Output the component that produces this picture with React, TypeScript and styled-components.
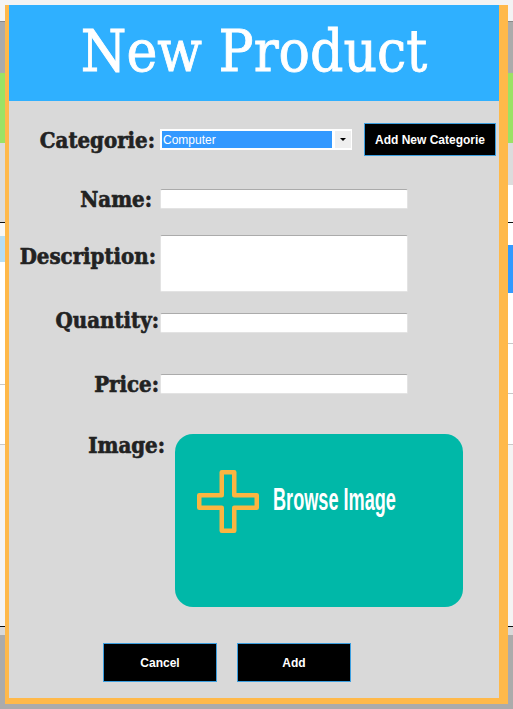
import styled, { createGlobalStyle } from 'styled-components';
import { FC } from 'react';

const GlobalStyle = createGlobalStyle`
  html, body {
    margin: 0;
    height: 709px;
    overflow: hidden;
  }
  body {
    font-family: "Liberation Sans", Arial, sans-serif;
    background:
      linear-gradient(to bottom,
        #f3f3f3 0 21px, #8a8a8a 21px 22px, #ababab 22px 73px, #9be264 73px 143px,
        #dcdcdc 143px 185px, #ffffff 185px 222px, #111 222px 223px, #ffffff 223px 245px,
        #3399ff 245px 293px, #ffffff 293px 343px, #c8c8c8 343px 344px, #ffffff 344px 393px,
        #c8c8c8 393px 394px, #ffffff 394px 444px, #c8c8c8 444px 445px, #f4f4f4 445px 626px,
        #111 626px 627px, #d9d9d9 627px 635px, #ababab 635px) right top / 5px 100% no-repeat,
      linear-gradient(to bottom,
        #f3f3f3 0 21px, #8a8a8a 21px 22px, #ababab 22px 73px, #9be264 73px 143px,
        #dcdcdc 143px 222px, #111 222px 223px, #f7f7f7 223px 236px, #b5def5 236px 262px,
        #ffffff 262px 384px, #c8c8c8 384px 385px, #ffffff 385px 444px, #c8c8c8 444px 445px,
        #f4f4f4 445px 626px, #111 626px 627px, #d9d9d9 627px 635px, #ababab 635px);
  }
`;

const PlusIcon: FC = () => (
  <IconBox width="62" height="63" viewBox="0 0 62 63">
    <path
      d="M24.75 2.25 H37.25 V25.25 H59.75 V37.75 H37.25 V60.75 H24.75 V37.75 H2.25 V25.25 H24.75 Z"
      fill="none"
      stroke="#fbb541"
      strokeWidth="4.5"
      strokeLinejoin="round"
    />
  </IconBox>
);

const App: FC = () => {
  return (
    <>
      <GlobalStyle />
      <Dialog>
        <Header>
          <Title>New Product</Title>
        </Header>
        <Body>
          <Row $top={22}>
            <Label $w={146}>Categorie:</Label>
            <Combo $gap={5}>
              <ComboValue>Computer</ComboValue>
              <ComboArrow>
                <Caret />
              </ComboArrow>
            </Combo>
            <ActionButton $w={132} $h={33} $gap={12}>Add New Categorie</ActionButton>
          </Row>
          <Row $top={33}>
            <Label $w={143}>Name:</Label>
            <TextBox $gap={8} />
          </Row>
          <Row $top={26} $topAlign>
            <Label $w={147} $pad={11}>Description:</Label>
            <TextArea $gap={4} />
          </Row>
          <Row $top={21}>
            <Label $w={150} $lift={3}>Quantity:</Label>
            <TextBox $gap={1} />
          </Row>
          <Row $top={41}>
            <Label $w={150}>Price:</Label>
            <TextBox $gap={1} />
          </Row>
          <Row $top={40} $topAlign>
            <Label $w={156} $pad={1}>Image:</Label>
            <BrowseCard>
              <PlusIcon />
              <BrowseText>Browse Image</BrowseText>
            </BrowseCard>
          </Row>
          <ButtonBar>
            <ActionButton $w={114} $h={39}>Cancel</ActionButton>
            <ActionButton $w={114} $h={39}>Add</ActionButton>
          </ButtonBar>
        </Body>
      </Dialog>
    </>
  );
};

export default App;

const Dialog = styled.div`
  margin: 5px 0 0 5px;
  width: 490px;
  height: 693px;
  border-left: 4px solid #ffb94a;
  border-right: 9px solid #ffb94a;
  border-bottom: 6px solid #ffb94a;
  display: flex;
  flex-direction: column;
`;

const Header = styled.div`
  height: 96px;
  flex-shrink: 0;
  background: #2fb0ff;
  display: flex;
  align-items: center;
  justify-content: center;
`;

const Title = styled.h1`
  margin: 0 0 4px 0;
  font-family: "DejaVu Serif", serif;
  font-stretch: condensed;
  font-weight: normal;
  font-size: 58px;
  line-height: 66px;
  color: #ffffff;
  -webkit-text-stroke: 0.8px #ffffff;
`;

const Body = styled.div`
  flex: 1;
  background: #d9d9d9;
  display: flex;
  flex-direction: column;
`;

const Row = styled.div<{ $top: number; $topAlign?: boolean }>`
  display: flex;
  align-items: ${(p) => (p.$topAlign ? 'flex-start' : 'center')};
  margin-top: ${(p) => p.$top}px;
`;

const Label = styled.div<{ $w: number; $pad?: number; $lift?: number }>`
  width: ${(p) => p.$w}px;
  flex-shrink: 0;
  text-align: right;
  font-family: "DejaVu Serif", serif;
  font-stretch: condensed;
  font-weight: bold;
  font-size: 22px;
  line-height: 20px;
  height: 20px;
  color: #222222;
  -webkit-text-stroke: 0.6px #222222;
  white-space: nowrap;
  padding-top: ${(p) => p.$pad ?? 0}px;
  margin-top: ${(p) => -(p.$lift ?? 0) * 2}px;
`;

const Combo = styled.div<{ $gap: number }>`
  margin-left: ${(p) => p.$gap}px;
  width: 192px;
  height: 21px;
  box-sizing: border-box;
  background: #ffffff;
  padding: 2px 1px 2px 2px;
  display: flex;
  gap: 3px;
`;

const ComboValue = styled.div`
  flex: 1;
  background: #3399ff;
  color: #ffffff;
  font-size: 12px;
  line-height: 18px;
  padding-left: 1px;
`;

const ComboArrow = styled.div`
  width: 16px;
  background: #efefef;
  display: flex;
  align-items: center;
  justify-content: center;
`;

const Caret = styled.span`
  width: 0;
  height: 0;
  border-left: 3px solid transparent;
  border-right: 3px solid transparent;
  border-top: 3px solid #000;
`;

const ActionButton = styled.button<{ $w: number; $h: number; $gap?: number }>`
  margin-left: ${(p) => p.$gap ?? 0}px;
  width: ${(p) => p.$w}px;
  height: ${(p) => p.$h}px;
  flex-shrink: 0;
  background: #000000;
  border: 1px solid #3c9fe0;
  color: #ffffff;
  font-family: "Liberation Sans", Arial, sans-serif;
  font-weight: bold;
  font-size: 12px;
  padding: 0;
`;

const TextBox = styled.div<{ $gap: number }>`
  margin-left: ${(p) => p.$gap}px;
  width: 248px;
  height: 20px;
  box-sizing: border-box;
  background: #ffffff;
  border: 1px solid #e3e3e3;
  border-top-color: #ababab;
  border-radius: 2px;
`;

const TextArea = styled(TextBox)`
  height: 57px;
`;

const BrowseCard = styled.div`
  margin-left: 10px;
  width: 288px;
  height: 173px;
  box-sizing: border-box;
  overflow: hidden;
  background: #00b8a8;
  border-radius: 18px;
  padding: 36px 0 0 22px;
  display: flex;
  align-items: flex-start;
  gap: 14px;
`;

const IconBox = styled.svg`
  flex-shrink: 0;
`;

const BrowseText = styled.span`
  display: inline-block;
  margin-top: 12px;
  font-family: "Liberation Sans", Arial, sans-serif;
  font-weight: bold;
  font-size: 31px;
  line-height: 36px;
  color: #ffffff;
  transform: scaleX(0.585);
  transform-origin: left center;
  white-space: nowrap;
`;

const ButtonBar = styled.div`
  display: flex;
  gap: 20px;
  margin: 36px 0 0 94px;
`;
